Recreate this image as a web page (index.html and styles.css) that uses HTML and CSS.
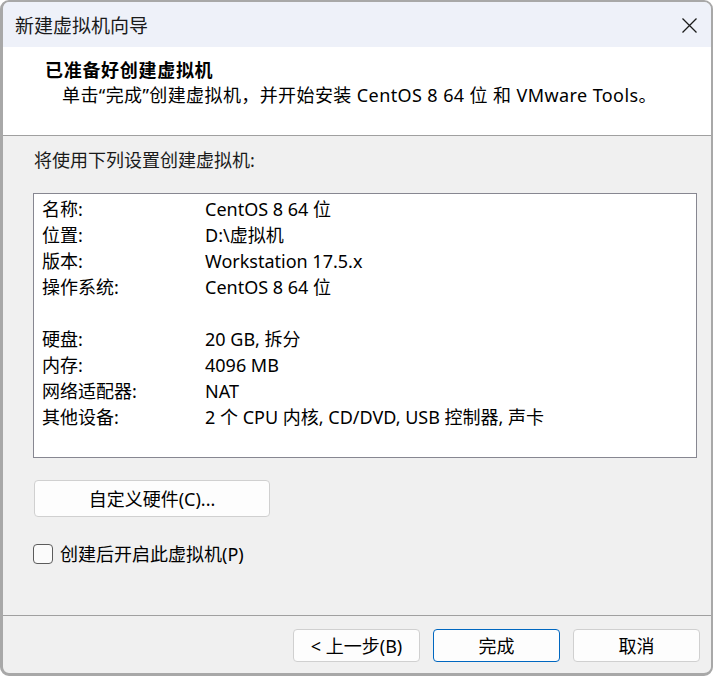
FILE: index.html
```html
<!DOCTYPE html>
<html lang="zh-CN">
<head>
<meta charset="utf-8">
<title>新建虚拟机向导</title>
<link rel="stylesheet" href="styles.css">
</head>
<body>
<div class="window">
  <div class="titlebar">
    <span class="title">新建虚拟机向导</span>
    <svg class="close" width="15" height="15" viewBox="0 0 15 15"><path d="M0.5 0.5 L14.5 14.5 M14.5 0.5 L0.5 14.5" stroke="#1b1b1b" stroke-width="1.3" fill="none"/></svg>
  </div>
  <div class="header">
    <div class="head-title">已准备好创建虚拟机</div>
    <div class="head-sub">单击“完成”创建虚拟机，并开始安装 CentOS 8 64 位 和 VMware Tools。</div>
  </div>
  <div class="main">
    <div class="intro">将使用下列设置创建虚拟机:</div>
    <div class="summary">
      <div class="row"><span class="k">名称:</span><span class="v">CentOS 8 64 位</span></div>
      <div class="row"><span class="k">位置:</span><span class="v">D:\虚拟机</span></div>
      <div class="row"><span class="k">版本:</span><span class="v">Workstation 17.5.x</span></div>
      <div class="row"><span class="k">操作系统:</span><span class="v">CentOS 8 64 位</span></div>
      <div class="row blank"></div>
      <div class="row"><span class="k">硬盘:</span><span class="v">20 GB, 拆分</span></div>
      <div class="row"><span class="k">内存:</span><span class="v">4096 MB</span></div>
      <div class="row"><span class="k">网络适配器:</span><span class="v">NAT</span></div>
      <div class="row"><span class="k">其他设备:</span><span class="v">2 个 CPU 内核, CD/DVD, USB 控制器, 声卡</span></div>
    </div>
    <button class="btn custom">自定义硬件(C)...</button>
    <label class="check"><span class="box"></span><span>创建后开启此虚拟机(P)</span></label>
  </div>
  <div class="footer">
    <button class="btn">&lt; 上一步(B)</button>
    <button class="btn primary">完成</button>
    <button class="btn">取消</button>
  </div>
</div>
</body>
</html>
```

FILE: styles.css
```css
* { box-sizing: border-box; }
html, body {
  margin: 0;
  padding: 0;
  background: #ffffff;
}
body {
  font-family: "Noto Sans", "Noto Sans CJK SC", sans-serif;
  font-size: 18px;
  color: #000;
}
.window {
  width: 713px;
  height: 676px;
  border: 2px solid #a8a8a8;
  border-left-width: 3px;
  border-bottom-width: 3px;
  border-radius: 9px;
  overflow: hidden;
  background: #f0f0f0;
  display: flex;
  flex-direction: column;
}
.titlebar {
  height: 45px;
  flex: none;
  background: #eef1f9;
  display: flex;
  align-items: center;
  justify-content: space-between;
  padding: 0 14px 0 12px;
}
.title {
  font-family: "Noto Sans CJK SC", sans-serif;
  font-size: 19px;
  line-height: 24px;
  color: #1a1a1a;
}
.close { display: block; margin-top: 1px; }
.header {
  height: 89px;
  flex: none;
  background: #ffffff;
  border-bottom: 1px solid #a0a0a0;
  padding: 10px 0 0 42px;
}
.head-title {
  font-family: "Noto Sans CJK SC", sans-serif;
  font-weight: 700;
  font-size: 18px;
  line-height: 24px;
  letter-spacing: 0.7px;
}
.head-sub {
  padding-left: 17px;
  line-height: 24px;
  margin-top: 2px;
  letter-spacing: 0.4px;
}
.main {
  flex: 1;
  padding: 11px 14px 0 30px;
  display: flex;
  flex-direction: column;
  align-items: flex-start;
}
.intro {
  line-height: 26px;
  padding-left: 1px;
  color: #1a1a1a;
}
.summary {
  margin-top: 20px;
  width: 664px;
  height: 265px;
  background: #ffffff;
  border: 1px solid #878791;
  padding: 2px 0 0 8px;
}
.row {
  display: grid;
  grid-template-columns: 163px 1fr;
  height: 26px;
  line-height: 26px;
}
.btn {
  font-family: "Noto Sans", "Noto Sans CJK SC", sans-serif;
  font-size: 18px;
  color: #000;
  background: #fdfdfd;
  border: 1px solid #d0d0d0;
  border-radius: 4px;
  padding: 0;
  width: 127px;
  height: 33px;
  line-height: 30px;
}
.custom {
  margin-top: 22px;
  margin-left: 1px;
  width: 236px;
  height: 37px;
}
.check {
  margin-top: 24px;
  display: flex;
  align-items: center;
  gap: 7px;
  line-height: 26px;
}
.box {
  width: 20px;
  height: 20px;
  border: 1px solid #5c5c5c;
  border-radius: 4px;
  background: #fbfbfb;
}
.footer {
  height: 58px;
  flex: none;
  border-top: 1px solid #a0a0a0;
  display: flex;
  justify-content: flex-end;
  align-items: flex-start;
  gap: 13px;
  padding: 13px 11px 0 0;
}
.primary {
  border-color: #0067c0;
}
```
